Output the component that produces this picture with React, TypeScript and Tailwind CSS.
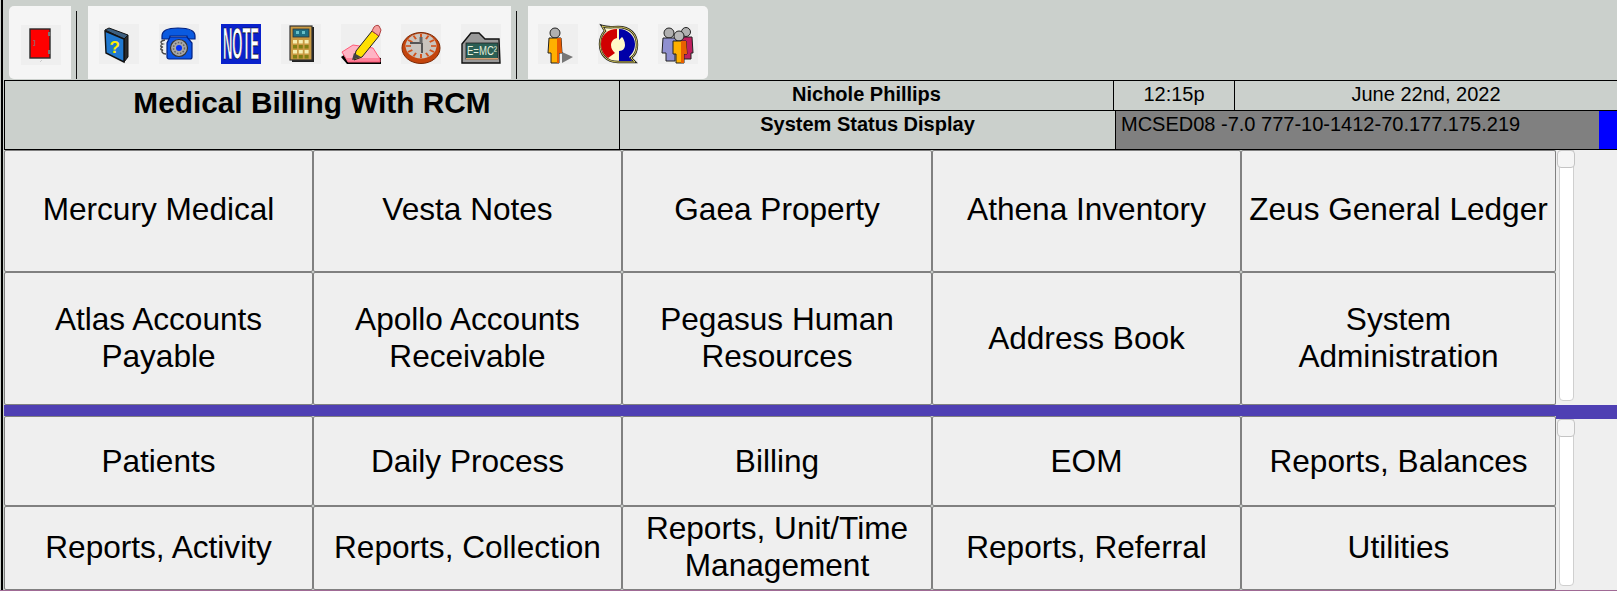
const topTiles = [
  ["Mercury Medical", "Vesta Notes", "Gaea Property", "Athena Inventory", "Zeus General Ledger"],
  ["Atlas Accounts Payable", "Apollo Accounts Receivable", "Pegasus Human Resources", "Address Book", "System Administration"],
];

const bottomTiles = [
  ["Patients", "Daily Process", "Billing", "EOM", "Reports, Balances"],
  ["Reports, Activity", "Reports, Collection", "Reports, Unit/Time Management", "Reports, Referral", "Utilities"],
];

function IconBox({ children, className = "" }: { children: React.ReactNode; className?: string }) {
  return (
    <button className={"h-10 w-10 shrink-0 bg-[#efefef] " + className}>
      <svg viewBox="0 0 40 40" className="h-10 w-10 overflow-visible">
        {children}
      </svg>
    </button>
  );
}

function Door() {
  return (
    <IconBox>
      <rect x="9" y="4" width="20" height="29" fill="#ff0000" stroke="#2a2a2a" strokeWidth="1.4" />
      <rect x="27" y="7" width="2.5" height="4" fill="#777" />
      <rect x="27" y="25" width="2.5" height="4" fill="#777" />
      <path d="M12 15.5h1.5v5H12" fill="none" stroke="#a55" strokeWidth="1.2" />
      <path d="M19 37l2-2" stroke="#ccc" strokeWidth="1" />
    </IconBox>
  );
}

function Book() {
  return (
    <IconBox>
      <path d="M6 6l4-2 19 7-4 4z" fill="#3c5f80" stroke="#111" strokeWidth="1" />
      <path d="M25 15l4-4v22l-4 5z" fill="#2a2a2a" stroke="#111" strokeWidth="1" />
      <path d="M6 7l19 8v23L7 29z" fill="#1f78d0" stroke="#111" strokeWidth="1.4" />
      <text x="10.5" y="29" fontSize="17" fontWeight="700" fill="#ffee00" fontFamily="Liberation Sans">
        ?
      </text>
    </IconBox>
  );
}

function Phone() {
  return (
    <IconBox>
      <path d="M3 12c0-5 5-8 16-8s17 3 17 8v3h-8v-3H11v3H3z" fill="#0a5ae0" stroke="#002080" strokeWidth="1.2" />
      <path d="M11 13h17l5 6v14a2 2 0 0 1-2 2H10a2 2 0 0 1-2-2V19z" fill="#0b55e8" stroke="#002080" strokeWidth="1.2" />
      <circle cx="20" cy="24" r="8.5" fill="#a8a8a8" stroke="#333" strokeWidth="1.2" />
      <circle cx="20" cy="24" r="5.5" fill="none" stroke="#666" strokeWidth="1.5" strokeDasharray="1.5 1.5" />
      <circle cx="20" cy="24" r="3" fill="#0030ff" />
      <path d="M6 16c-5 1-5 3-2 4-3 1-3 3 0 3-3 1-3 3 0 3-2 1-1 4 3 4" fill="none" stroke="#444" strokeWidth="1.3" />
    </IconBox>
  );
}

function Note() {
  return (
    <IconBox className="ml-[2px]">
      <rect width="40" height="40" fill="#0a22cc" />
      <text
        x="2"
        y="35"
        fontSize="44"
        fontWeight="700"
        fill="#fff"
        stroke="#000"
        strokeWidth="0.7"
        textLength="36"
        lengthAdjust="spacingAndGlyphs"
        fontFamily="Liberation Sans"
      >
        NOTE
      </text>
    </IconBox>
  );
}

function Calc() {
  const keys = [0, 1, 2, 3].flatMap((r) => [0, 1, 2].map((c) => [c, r]));
  return (
    <IconBox>
      <rect x="11" y="3" width="22" height="35" fill="#222" />
      <rect x="9" y="2" width="22" height="34" fill="#c99a42" stroke="#333" strokeWidth="1.2" />
      <rect x="12" y="5" width="16" height="8" fill="#1f6f82" stroke="#333" strokeWidth="0.8" />
      <rect x="15" y="7" width="3" height="3" fill="#68c0c8" />
      <rect x="21" y="7" width="3" height="3" fill="#68c0c8" />
      {keys.map(([c, r]) => (
        <rect key={`${c}-${r}`} x={12 + c * 5.8} y={16 + r * 5} width="4" height="3.5" fill={r % 2 === 0 ? "#f5eeb0" : "#7f7f14"} />
      ))}
    </IconBox>
  );
}

function Pencil() {
  return (
    <IconBox>
      <path d="M0 33l6-4 34 5v6H6z" fill="#000" />
      <path d="M1 28l11-7 20 3 7 11v3H7z" fill="#ffb4c4" stroke="#ff5c78" strokeWidth="1" />
      <path d="M6 35h33M7 37h32" stroke="#ff5070" strokeWidth="1" />
      <path d="M15 27l16-20 7 5-17 21-8 3z" fill="#ffe000" stroke="#222" strokeWidth="1" />
      <path d="M31 7l2-4c2-2 4-2 5-1l2 4-2 6z" fill="#f5a0a0" stroke="#b04040" strokeWidth="1" />
      <path d="M11 36l2-7 7 4z" fill="#444" />
    </IconBox>
  );
}

function Clock() {
  const ticks = [0, 30, 60, 90, 120, 150, 180, 210, 240, 270, 300, 330];
  return (
    <IconBox>
      <ellipse cx="20" cy="24" rx="19" ry="15.5" fill="#c4440c" stroke="#7a2a08" strokeWidth="1" />
      <ellipse cx="20" cy="22" rx="15.5" ry="12.5" fill="#c9c4be" />
      <g transform="translate(20 22) scale(1 0.8)">
        {ticks.map((t) => (
          <rect key={t} x="-1" y="-15" width="2" height="5" fill="#d2521c" transform={`rotate(${t})`} />
        ))}
      </g>
      <path d="M20 19H9M21 19v10" stroke="#555" strokeWidth="2" />
      <path d="M20 19v-6" stroke="#666" strokeWidth="3" />
    </IconBox>
  );
}

function Folder() {
  return (
    <IconBox>
      <path d="M1 20l9-11h8l6 6h14l1 24H1z" fill="#999" stroke="#111" strokeWidth="1.4" />
      <rect x="5" y="19" width="32" height="16" fill="#2b5f55" stroke="#222" strokeWidth="0.8" />
      <rect x="5" y="34" width="32" height="1.5" fill="#d8a070" />
      <text x="6" y="31" fontSize="12" fill="#e4eedc" textLength="30" lengthAdjust="spacingAndGlyphs" fontFamily="Liberation Sans">
        E=MC²
      </text>
    </IconBox>
  );
}

function Person() {
  return (
    <IconBox>
      <path d="M24 28l11 5-11 6z" fill="#777" />
      <circle cx="17" cy="9" r="5" fill="#b0b0b0" stroke="#222" strokeWidth="1" />
      <path d="M11 14h12l1 15h-3v10h-8V29h-3z" fill="#ffb000" stroke="#222" strokeWidth="1" />
      <path d="M19 14h4l1 15h-3v10h-2z" fill="#e85a00" />
    </IconBox>
  );
}

function Refresh() {
  const outline = "M4 2c6 2 9 1 16 1 12 0 19 7 19 18 0 6-3 11-6 13l4 4H20C8 38 2 30 2 20c0-6 2-10 5-13z";
  return (
    <IconBox>
      <path d={outline} fill="#fff8c8" stroke="#222" strokeWidth="2.4" />
      <path d={outline} fill="none" stroke="#e8d860" strokeWidth="0.9" />
      <path d="M19 5v9c-4 1-6 4-6 7 0 4 2 6 4 8l-7 5c-4-3-7-8-7-14C3 11 10 5 19 5z" fill="#d00000" />
      <path d="M21 5c9 0 16 7 16 15 0 6-3 10-6 13l3 4H21V27c4 0 6-3 6-6 0-4-2-7-3-8l-3 3z" fill="#0000a8" />
    </IconBox>
  );
}

function Group() {
  return (
    <IconBox>
      <circle cx="28" cy="8" r="4.5" fill="#b0b0b0" stroke="#222" strokeWidth="1" />
      <path d="M23 13h11l1 16h-2v6h-9z" fill="#c02060" stroke="#222" strokeWidth="1" />
      <circle cx="11" cy="9" r="5" fill="#b0b0b0" stroke="#222" strokeWidth="1" />
      <path d="M5 14h13l2 15h-3v8H8v-8H4z" fill="#8f90d0" stroke="#222" strokeWidth="1" />
      <circle cx="21" cy="12" r="5" fill="#b8b8b8" stroke="#222" strokeWidth="1" />
      <path d="M15 17h13l1 13h-3v9h-8v-9h-3z" fill="#ffb000" stroke="#222" strokeWidth="1" />
      <path d="M23 17h5l1 13h-3v9h-3z" fill="#e86000" />
    </IconBox>
  );
}

function Separator() {
  return <div className="mt-[5px] mr-[11px] ml-[5px] h-[68px] w-px shrink-0 bg-[#111]" />;
}

function Scrollbar({ className = "" }: { className?: string }) {
  return (
    <div className={"relative h-full w-[61px] bg-[#efefef] " + className}>
      <div className="absolute top-0 bottom-[4px] left-[3px] w-[15px] rounded-b-[4px] border border-[#cfcfcf] bg-white" />
      <div className="absolute top-0 left-[1px] h-[18px] w-[18px] rounded-[4px] border border-[#c4c4c4] bg-[#f5f5f5]" />
    </div>
  );
}

// pads: bottom padding per row, the rows don't sit quite centered in the screenshot
function TileGrid({ rows, heights, pads }: { rows: string[][]; heights: string; pads: string[] }) {
  return (
    <div className={"grid w-[1552px] grid-cols-[309px_309px_310px_309px_315px] " + heights}>
      {rows.map((row, i) =>
        row.map((label) => (
          <button
            key={label}
            className={
              "flex items-center justify-center rounded-[2px] border border-[#808080] bg-[#efefef] px-1 text-center text-[31.6px] leading-[37px] text-black " +
              pads[i]
            }
          >
            {label}
          </button>
        )),
      )}
    </div>
  );
}

export default function App() {
  return (
    <div className="h-[591px] w-[1617px] overflow-hidden bg-[#cbd0cc] font-['Liberation_Sans',Arial,sans-serif] text-black">
      <div className="ml-px h-[590px] border-l-2 border-black pl-px">
        <div className="flex h-[80px] pt-[6px] pl-[5px]">
          <div className="flex h-[73px] gap-5 rounded-l-[5px] bg-[#f5f5f5] pt-[19px] pr-[10px] pl-[12px]">
            <Door />
          </div>
          <Separator />
          <div className="flex h-[73px] gap-5 bg-[#f5f5f5] pt-[18px] pr-[10px] pl-[11px]">
            <Book />
            <Phone />
            <Note />
            <Calc />
            <Pencil />
            <Clock />
            <Folder />
          </div>
          <Separator />
          <div className="flex h-[73px] gap-5 rounded-r-[5px] bg-[#f5f5f5] pt-[18px] pr-[10px] pl-[10px]">
            <Person />
            <Refresh />
            <Group />
          </div>
        </div>

        <div className="grid h-[70px] grid-cols-[614px_494px_121px_1fr] grid-rows-[30px_1fr] border-y border-l border-black">
          <div className="row-span-2 pt-[6px] text-center text-[29.8px] leading-8 font-bold">Medical Billing With RCM</div>
          <div className="border-b border-l border-black text-center text-[20px] leading-[27px] font-bold">Nichole Phillips</div>
          <div className="border-b border-l border-black text-center text-[20px] leading-[27px]">12:15p</div>
          <div className="border-b border-l border-black text-center text-[20px] leading-[27px]">June 22nd, 2022</div>
          <div className="col-span-3 flex">
            <div className="w-[496px] border-l border-black text-center text-[20px] leading-[26px] font-bold">System Status Display</div>
            <div className="flex-1 border-l border-black bg-[#808080] pl-[5px] text-[20px] leading-[26px]">MCSED08 -7.0 777-10-1412-70.177.175.219</div>
            <div className="w-[18px] bg-[#0000ff]" />
          </div>
        </div>

        <div className="flex h-[255px]">
          <TileGrid rows={topTiles} heights="grid-rows-[122px_133px]" pads={["pb-[4px]", "pb-[1px]"]} />
          <Scrollbar />
        </div>
        <div className="h-[11px] bg-[#4e3fb3]" />
        <div className="flex h-[174px]">
          <TileGrid rows={bottomTiles} heights="grid-rows-[90px_84px]" pads={["pb-0", "pb-[2px]"]} />
          <Scrollbar className="border-t-[3px] border-[#4e3fb3]" />
        </div>
      </div>
      <div className="h-px bg-[#a06a95]" />
    </div>
  );
}
